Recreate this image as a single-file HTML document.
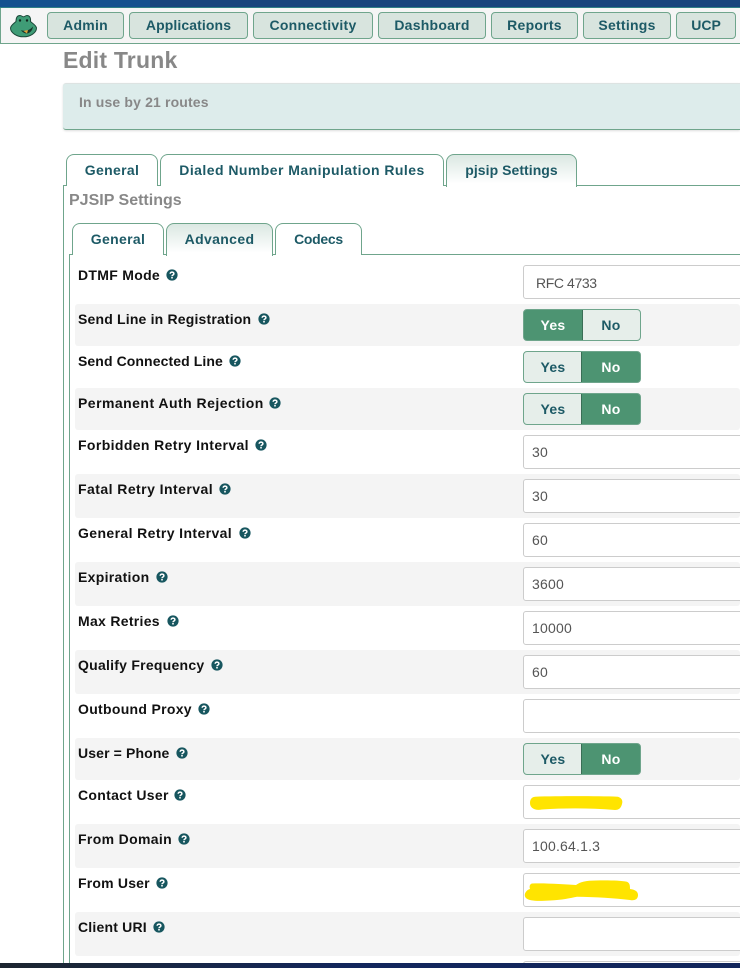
<!DOCTYPE html>
<html lang="en"><head><meta charset="utf-8"><title>Edit Trunk</title>
<style>
html,body{margin:0;padding:0;background:#fff;width:740px;height:968px;overflow:hidden}
body{position:relative;font-family:"Liberation Sans",sans-serif;font-weight:700;font-size:14px}
.a{position:absolute;box-sizing:border-box}
.nb{position:absolute;top:12px;height:27px;box-sizing:border-box;background:#d8e4de;border:1px solid #6fa58c;border-radius:4px;color:#1d5a66;text-align:center;line-height:25px;font-size:14px;letter-spacing:.25px}
.tab{position:absolute;box-sizing:border-box;height:32px;border:1px solid #6fa58c;border-bottom:0;border-radius:8px 8px 0 0;background:#fff;color:#1d5a66;text-align:center;line-height:30px;letter-spacing:.35px}
.tab.on{height:33px;background:linear-gradient(#dbe8e2,#fff 90%)}
.row{position:absolute;left:75px;width:665px;background:#f4f4f4;border-radius:3px}
.l{position:absolute;left:78px;height:20px;line-height:20px;color:#111;letter-spacing:.3px;white-space:nowrap}
.h{position:absolute;width:12px;height:12px}
.in{position:absolute;left:523px;width:240px;height:34px;box-sizing:border-box;background:#fff;border:1px solid #ccc;border-radius:3px;font-weight:400;color:#555;line-height:33px;padding-left:8px;font-size:14px;letter-spacing:.2px}
.t{position:absolute;left:523px;width:118px;height:32px;box-sizing:border-box;border:1px solid #6fa58c;border-radius:4px;background:#e6eeea;color:#1d5a66;overflow:hidden}
.t span{position:absolute;top:0;height:30px;line-height:30px;text-align:center;letter-spacing:.3px}
.y{left:0;width:58px}.n{left:58px;width:58px}
.t span.on{background:#4d9472;color:#fff;box-shadow:0 0 0 1px #3a6e56}
</style></head><body>
<svg width="0" height="0" style="position:absolute"><defs><symbol id="q" viewBox="0 0 12 12"><circle cx="6" cy="6" r="5.6" fill="#17565f"/><path d="M4.2 4.8C4.2 3.7 5 3.1 6 3.1S7.9 3.7 7.9 4.7C7.9 5.9 6 6 6 7.2" fill="none" stroke="#fff" stroke-width="1.5"/><rect x="5.2" y="8" width="1.6" height="1.5" fill="#fff"/></symbol></defs></svg>

<div class="a" style="left:0;top:0;width:740px;height:7px;background:#17437d"></div>
<div class="a" style="left:0;top:0;width:150px;height:7px;background:#14508f"></div>
<div class="a" style="left:0;top:7px;width:740px;height:1px;background:#2f7f86"></div>
<div class="a" style="left:0;top:8px;width:740px;height:36px;background:#f5f5f5;border-left:1px solid #6fa58c;border-bottom:1px solid #6fa58c"></div>
<svg class="a" style="left:9px;top:14px" width="29" height="24" viewBox="0 0 29 24"><path d="M1.500 14C2 11 5 9.500 7 7.500 7 3 9 1.500 11 1.500 12.500 1.500 13.500 2.800 14.500 2.800 15.500 2.800 16.500 1.500 18 1.500 20 1.500 22 3 21.500 7.500 23.500 9.500 27 11 27.500 14 27.500 19 21 22.800 14.500 22.800 8 22.800 1.500 19 1.500 14Z" fill="#3f9c76" stroke="#1c4a3a" stroke-width="1"/><circle cx="11" cy="6.500" r="1.200" fill="#10281f"/><circle cx="18" cy="6.500" r="1.200" fill="#10281f"/><path d="M12 16C16 18 21 16 24 12.500 23.500 17 20 20 17 19.500 15 19 13 18 12 16Z" fill="#17352a"/><path d="M14.500 17L19 16 18 19.500Z" fill="#e0a23a"/></svg>

<div class="nb" style="left:47px;width:77px">Admin</div>
<div class="nb" style="left:129px;width:119px;letter-spacing:.1px">Applications</div>
<div class="nb" style="left:253px;width:120px">Connectivity</div>
<div class="nb" style="left:378px;width:108px">Dashboard</div>
<div class="nb" style="left:491px;width:87px">Reports</div>
<div class="nb" style="left:583px;width:88px">Settings</div>
<div class="nb" style="left:676px;width:60px;letter-spacing:0">UCP</div>

<div class="a" style="left:63px;top:46px;font-size:23px;line-height:28px;color:#888;letter-spacing:.2px">Edit Trunk</div>
<div class="a" style="left:63px;top:83px;width:677px;height:47px;background:#ddeceb;border-top:1px solid #dde3e2;border-bottom:1px solid #6fa58c;border-radius:3px 0 0 3px;box-shadow:0 1px 2px #ddd;color:#888;padding:9px 0 0 16px;line-height:18px;letter-spacing:.15px">In use by 21 routes</div>

<div class="a" style="left:63px;top:185px;width:700px;height:790px;border:1px solid #6fa58c"></div>
<div class="tab" style="left:66px;top:154px;width:92px">General</div>
<div class="tab" style="left:160px;top:154px;width:284px;letter-spacing:.45px">Dialed Number Manipulation Rules</div>
<div class="tab on" style="left:446px;top:154px;width:131px;letter-spacing:.05px">pjsip Settings</div>

<div class="a" style="left:69px;top:190px;font-size:16px;line-height:21px;color:#888">PJSIP Settings</div>

<div class="a" style="left:69px;top:254px;width:700px;height:730px;border:1px solid #6fa58c"></div>
<div class="tab" style="left:72px;top:223px;width:92px">General</div>
<div class="tab on" style="left:166px;top:223px;width:107px">Advanced</div>
<div class="tab" style="left:275px;top:223px;width:87px;letter-spacing:-.3px">Codecs</div>

<div class="row" style="top:304px;height:42px"></div>
<div class="row" style="top:388px;height:42px"></div>
<div class="row" style="top:474px;height:44px"></div>
<div class="row" style="top:562px;height:44px"></div>
<div class="row" style="top:650px;height:44px"></div>
<div class="row" style="top:738px;height:42px"></div>
<div class="row" style="top:824px;height:44px"></div>
<div class="row" style="top:912px;height:44px"></div>

<div class="l" style="top:265px">DTMF Mode</div><svg class="h" style="left:166px;top:269px"><use href="#q"/></svg>
<div class="l" style="top:309px;letter-spacing:.18px">Send Line in Registration</div><svg class="h" style="left:258px;top:313px"><use href="#q"/></svg>
<div class="l" style="top:351px;letter-spacing:.09px">Send Connected Line</div><svg class="h" style="left:229px;top:355px"><use href="#q"/></svg>
<div class="l" style="top:393px;letter-spacing:.47px">Permanent Auth Rejection</div><svg class="h" style="left:269px;top:397px"><use href="#q"/></svg>
<div class="l" style="top:435px;letter-spacing:.38px">Forbidden Retry Interval</div><svg class="h" style="left:255px;top:439px"><use href="#q"/></svg>
<div class="l" style="top:479px;letter-spacing:.45px">Fatal Retry Interval</div><svg class="h" style="left:219px;top:483px"><use href="#q"/></svg>
<div class="l" style="top:523px;letter-spacing:.39px">General Retry Interval</div><svg class="h" style="left:239px;top:527px"><use href="#q"/></svg>
<div class="l" style="top:567px">Expiration</div><svg class="h" style="left:156px;top:571px"><use href="#q"/></svg>
<div class="l" style="top:611px">Max Retries</div><svg class="h" style="left:167px;top:615px"><use href="#q"/></svg>
<div class="l" style="top:655px;letter-spacing:.25px">Qualify Frequency</div><svg class="h" style="left:211px;top:659px"><use href="#q"/></svg>
<div class="l" style="top:699px">Outbound Proxy</div><svg class="h" style="left:198px;top:703px"><use href="#q"/></svg>
<div class="l" style="top:743px;letter-spacing:.13px">User = Phone</div><svg class="h" style="left:176px;top:747px"><use href="#q"/></svg>
<div class="l" style="top:785px">Contact User</div><svg class="h" style="left:174px;top:789px"><use href="#q"/></svg>
<div class="l" style="top:829px;letter-spacing:.35px">From Domain</div><svg class="h" style="left:178px;top:833px"><use href="#q"/></svg>
<div class="l" style="top:873px;letter-spacing:.2px">From User</div><svg class="h" style="left:156px;top:877px"><use href="#q"/></svg>
<div class="l" style="top:917px;letter-spacing:.2px">Client URI</div><svg class="h" style="left:153px;top:921px"><use href="#q"/></svg>

<div class="in" style="top:265px;padding-left:12px;line-height:35px;letter-spacing:-.4px">RFC 4733</div>
<div class="t" style="top:309px"><span class="y on">Yes</span><span class="n">No</span></div>
<div class="t" style="top:351px"><span class="y">Yes</span><span class="n on">No</span></div>
<div class="t" style="top:393px"><span class="y">Yes</span><span class="n on">No</span></div>
<div class="in" style="top:435px">30</div>
<div class="in" style="top:479px">30</div>
<div class="in" style="top:523px">60</div>
<div class="in" style="top:567px">3600</div>
<div class="in" style="top:611px">10000</div>
<div class="in" style="top:655px">60</div>
<div class="in" style="top:699px"></div>
<div class="t" style="top:743px"><span class="y">Yes</span><span class="n on">No</span></div>
<div class="in" style="top:785px"></div>
<div class="in" style="top:829px">100.64.1.3</div>
<div class="in" style="top:873px"></div>
<div class="in" style="top:917px"></div>
<div class="in" style="top:961px"></div>

<svg class="a" style="left:520px;top:790px" width="125" height="115" viewBox="0 0 125 115"><path d="M15 6.700C40 6 75 6 98 6.700 102 8 103 11 102 14 101 18 99 20 95 20 70 18 45 18 22 19.500 15 21 10 18 10 13 10 9 12 7 15 6.700Z" fill="#ffe400"/><path d="M12 93.500C28 93 44 94.500 56 95 60 92 66 90.500 76 90.500 88 90.200 100 90.500 107 91.700 110 93 110 96 110 99 114 99.500 118 101 118 105 118 109 115 111 110 110 95 108 75 107 57 106.700 50 108 42 110 30 110.500 20 111 9 111.500 6 108 3 105 6 100 10 99 9 96 10 94 12 93.500Z" fill="#ffe400"/></svg>

<div class="a" style="left:0;top:963px;width:740px;height:5px;background:linear-gradient(90deg,#1c2530 0,#1a2638 80px,#12265c 350px,#12265c 100%);z-index:5"></div>
</body></html>
